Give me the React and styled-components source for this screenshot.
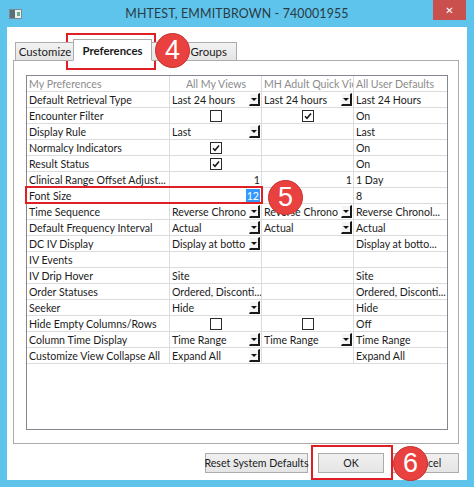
import React from 'react';
import styled, { createGlobalStyle } from 'styled-components';

const GlobalStyle = createGlobalStyle`
    body {
        margin: 0;
        font-family: Lato, "Noto Sans", sans-serif;
    }
`;

const Window = styled.div`
    position: relative;
    width: 474px;
    height: 487px;
    background: #5fc4ec;
    display: flex;
    flex-direction: column;
    overflow: hidden;
`;

const TitleBar = styled.div`
    height: 27px;
    display: grid;
    grid-template-columns: 1fr auto 1fr;
    align-items: start;
`;

const AppIcon = styled.span`
    margin: 9px 0 0 9px;
    width: 13px;
    height: 10px;
    display: flex;
    border: 1px solid #7d8a92;
    box-sizing: border-box;
    background: #e8f0f2;
    span:first-child { width: 5px; background: #5b6f78; }
    span:last-child { width: 3px; margin: 2px 0 2px 2px; background: #6cab8a; }
`;

const Title = styled.div`
    padding-top: 6px;
    font-size: 12.4px;
    color: #2b3a42;
    letter-spacing: 0.15px;
`;

const CloseButton = styled.div`
    justify-self: end;
    margin-right: 8px;
    width: 33px;
    height: 20px;
    background: #c9504d;
    color: #fff;
    font-family: "DejaVu Sans", sans-serif;
    font-size: 10px;
    font-weight: bold;
    display: flex;
    align-items: center;
    justify-content: center;
`;

const Client = styled.div`
    flex: 1;
    margin: 0 7px 7px;
    background: #fff;
    display: flex;
    flex-direction: column;
    font-size: 10.6px;
    color: #1b1b1b;
`;

const TabStrip = styled.div`
    display: flex;
    align-items: flex-end;
    height: 34px;
    padding-left: 8px;
    margin-bottom: -1px;
    position: relative;
    z-index: 1;
`;

const Tab = styled.div`
    width: ${(p) => p.$w}px;
    height: ${(p) => (p.$active ? '22px' : '19px')};
    box-sizing: border-box;
    margin: 0 ${(p) => (p.$active ? '-2px' : '0')};
    border: 1px solid #acacac;
    border-bottom: ${(p) => (p.$active ? '1px solid #fff' : '1px solid #acacac')};
    background: ${(p) => (p.$active ? '#fff' : 'linear-gradient(#f2f2f2, #e5e5e5)')};
    font-weight: ${(p) => (p.$active ? 'bold' : 'normal')};
    font-size: 11.4px;
    display: flex;
    align-items: center;
    justify-content: center;
    white-space: nowrap;
    position: relative;
    z-index: ${(p) => (p.$active ? 2 : 1)};
`;

const Panel = styled.div`
    margin: 0 8px 0 6px;
    height: 384px;
    box-sizing: border-box;
    border: 1px solid #acacac;
    padding: 14px 0 0 12px;
`;

const Grid = styled.div`
    width: 422px;
    height: 355px;
    box-sizing: border-box;
    border: 1px solid #828790;
    display: grid;
    grid-template-columns: 143px 92px 92px 93px;
    grid-auto-rows: 16px;
    align-content: start;
`;

const Cell = styled.div`
    box-sizing: border-box;
    border-right: 1px solid #dcdcdc;
    border-bottom: 1px solid #dcdcdc;
    padding: 0 1px 0 2px;
    display: flex;
    align-items: center;
    justify-content: ${(p) => p.$align || 'flex-start'};
    white-space: nowrap;
    overflow: hidden;
    color: ${(p) => (p.$head ? '#8c8c8c' : '#1b1b1b')};
    &:nth-child(4n) { border-right: none; }
`;

const CellText = styled.span`
    flex: 1;
    overflow: hidden;
`;

const Selected = styled.span`
    background: #3399ff;
    color: #fff;
    padding: 0 1px;
    line-height: 14px;
`;

const DropButton = styled.span`
    flex: none;
    width: 11px;
    height: 13px;
    box-sizing: border-box;
    margin-left: 2px;
    background: #f4f4f4;
    border-top: 1px solid #fff;
    border-left: 1px solid #fff;
    border-right: 2px solid #1a1a1a;
    border-bottom: 2px solid #1a1a1a;
    display: flex;
    align-items: center;
    justify-content: center;
    &::after {
        content: '';
        border-left: 3px solid transparent;
        border-right: 3px solid transparent;
        border-top: 3px solid #111;
    }
`;

const Box = styled.span`
    width: 12px;
    height: 12px;
    box-sizing: border-box;
    border: 1px solid #2a2a2a;
    background: #fff;
    display: flex;
    align-items: center;
    justify-content: center;
`;

const ButtonRow = styled.div`
    display: flex;
    justify-content: flex-end;
    gap: 8px;
    padding: 9px 8px 0 0;
`;

const Button = styled.div`
    width: ${(p) => p.$w}px;
    height: 20px;
    box-sizing: border-box;
    border: 1px solid #acacac;
    background: linear-gradient(#f0f0f0, #e5e5e5);
    display: flex;
    align-items: center;
    justify-content: center;
    white-space: nowrap;
    margin-left: ${(p) => p.$gap || 0}px;
`;

const Highlight = styled.div`
    position: absolute;
    box-sizing: border-box;
    border: 2px solid #e01e26;
`;

const Badge = styled.div`
    position: absolute;
    width: 35px;
    height: 35px;
    box-sizing: border-box;
    border-radius: 50%;
    background: #e8413f;
    border: 1px solid #c9302f;
    color: #fff;
    font-family: "Liberation Sans", Arial, sans-serif;
    font-size: 27px;
    display: flex;
    align-items: center;
    justify-content: center;
    z-index: 5;
`;

const Check = ({ on }) => (
    <Box>
        {on && (
            <svg width="8" height="8" viewBox="0 0 8 8">
                <path d="M1 4.2 L3 6.2 L7 1.5" fill="none" stroke="#1a1a1a" strokeWidth="1.6" />
            </svg>
        )}
    </Box>
);

const rows = [
    ['Default Retrieval Type', { dd: 'Last 24 hours' }, { dd: 'Last 24 hours' }, 'Last 24 Hours'],
    ['Encounter Filter', { check: false }, { check: true }, 'On'],
    ['Display Rule', { dd: 'Last' }, '', 'Last'],
    ['Normalcy Indicators', { check: true }, '', 'On'],
    ['Result Status', { check: true }, '', 'On'],
    ['Clinical Range Offset Adjust...', { num: '1' }, { num: '1' }, '1 Day'],
    ['Font Size', { sel: '12' }, '', '8'],
    ['Time Sequence', { dd: 'Reverse Chrono' }, { dd: 'Reverse Chrono' }, 'Reverse Chronol...'],
    ['Default Frequency Interval', { dd: 'Actual' }, { dd: 'Actual' }, 'Actual'],
    ['DC IV Display', { dd: 'Display at botto' }, '', 'Display at botto...'],
    ['IV Events', '', '', ''],
    ['IV Drip Hover', 'Site', '', 'Site'],
    ['Order Statuses', 'Ordered, Disconti...', '', 'Ordered, Disconti...'],
    ['Seeker', { dd: 'Hide' }, '', 'Hide'],
    ['Hide Empty Columns/Rows', { check: false }, { check: false }, 'Off'],
    ['Column Time Display', { dd: 'Time Range' }, { dd: 'Time Range' }, 'Time Range'],
    ['Customize View Collapse All', { dd: 'Expand All' }, '', 'Expand All'],
];

const renderCell = (v, key) => {
    if (typeof v === 'string') return <Cell key={key}>{v}</Cell>;
    if (v.dd !== undefined)
        return (
            <Cell key={key}>
                <CellText>{v.dd}</CellText>
                <DropButton />
            </Cell>
        );
    if (v.check !== undefined)
        return (
            <Cell key={key} $align="center">
                <Check on={v.check} />
            </Cell>
        );
    if (v.num !== undefined)
        return (
            <Cell key={key} $align="flex-end">
                {v.num}
            </Cell>
        );
    return (
        <Cell key={key} $align="flex-end">
            <Selected>{v.sel}</Selected>
        </Cell>
    );
};

const App = () => {
    return (
        <Window>
            <GlobalStyle />
            <TitleBar>
                <AppIcon>
                    <span />
                    <span />
                </AppIcon>
                <Title>MHTEST, EMMITBROWN - 740001955</Title>
                <CloseButton>✕</CloseButton>
            </TitleBar>
            <Client>
                <TabStrip>
                    <Tab $w={60}>Customize</Tab>
                    <Tab $w={79} $active>Preferences</Tab>
                    <Tab $w={87}>Clinic Groups</Tab>
                </TabStrip>
                <Panel>
                    <Grid>
                        <Cell $head>My Preferences</Cell>
                        <Cell $head $align="center">All My Views</Cell>
                        <Cell $head>MH Adult Quick Views</Cell>
                        <Cell $head>All User Defaults</Cell>
                        {rows.map((r, i) => (
                            <React.Fragment key={i}>
                                <Cell>{r[0]}</Cell>
                                {renderCell(r[1], 'b')}
                                {renderCell(r[2], 'c')}
                                {renderCell(r[3], 'd')}
                            </React.Fragment>
                        ))}
                    </Grid>
                </Panel>
                <ButtonRow>
                    <Button $w={103}>Reset System Defaults</Button>
                    <Button $w={66} $gap={2}>OK</Button>
                    <Button $w={67}>Cancel</Button>
                </ButtonRow>
            </Client>

            <Highlight style={{ left: 66, top: 33, width: 90, height: 37 }} />
            <Badge style={{ left: 155, top: 33 }}>4</Badge>
            <Highlight style={{ left: 25, top: 186, width: 238, height: 18 }} />
            <Badge style={{ left: 268, top: 180 }}>5</Badge>
            <Highlight style={{ left: 311, top: 445, width: 82, height: 35 }} />
            <Badge style={{ left: 393, top: 446 }}>6</Badge>
        </Window>
    );
};

export default App;
